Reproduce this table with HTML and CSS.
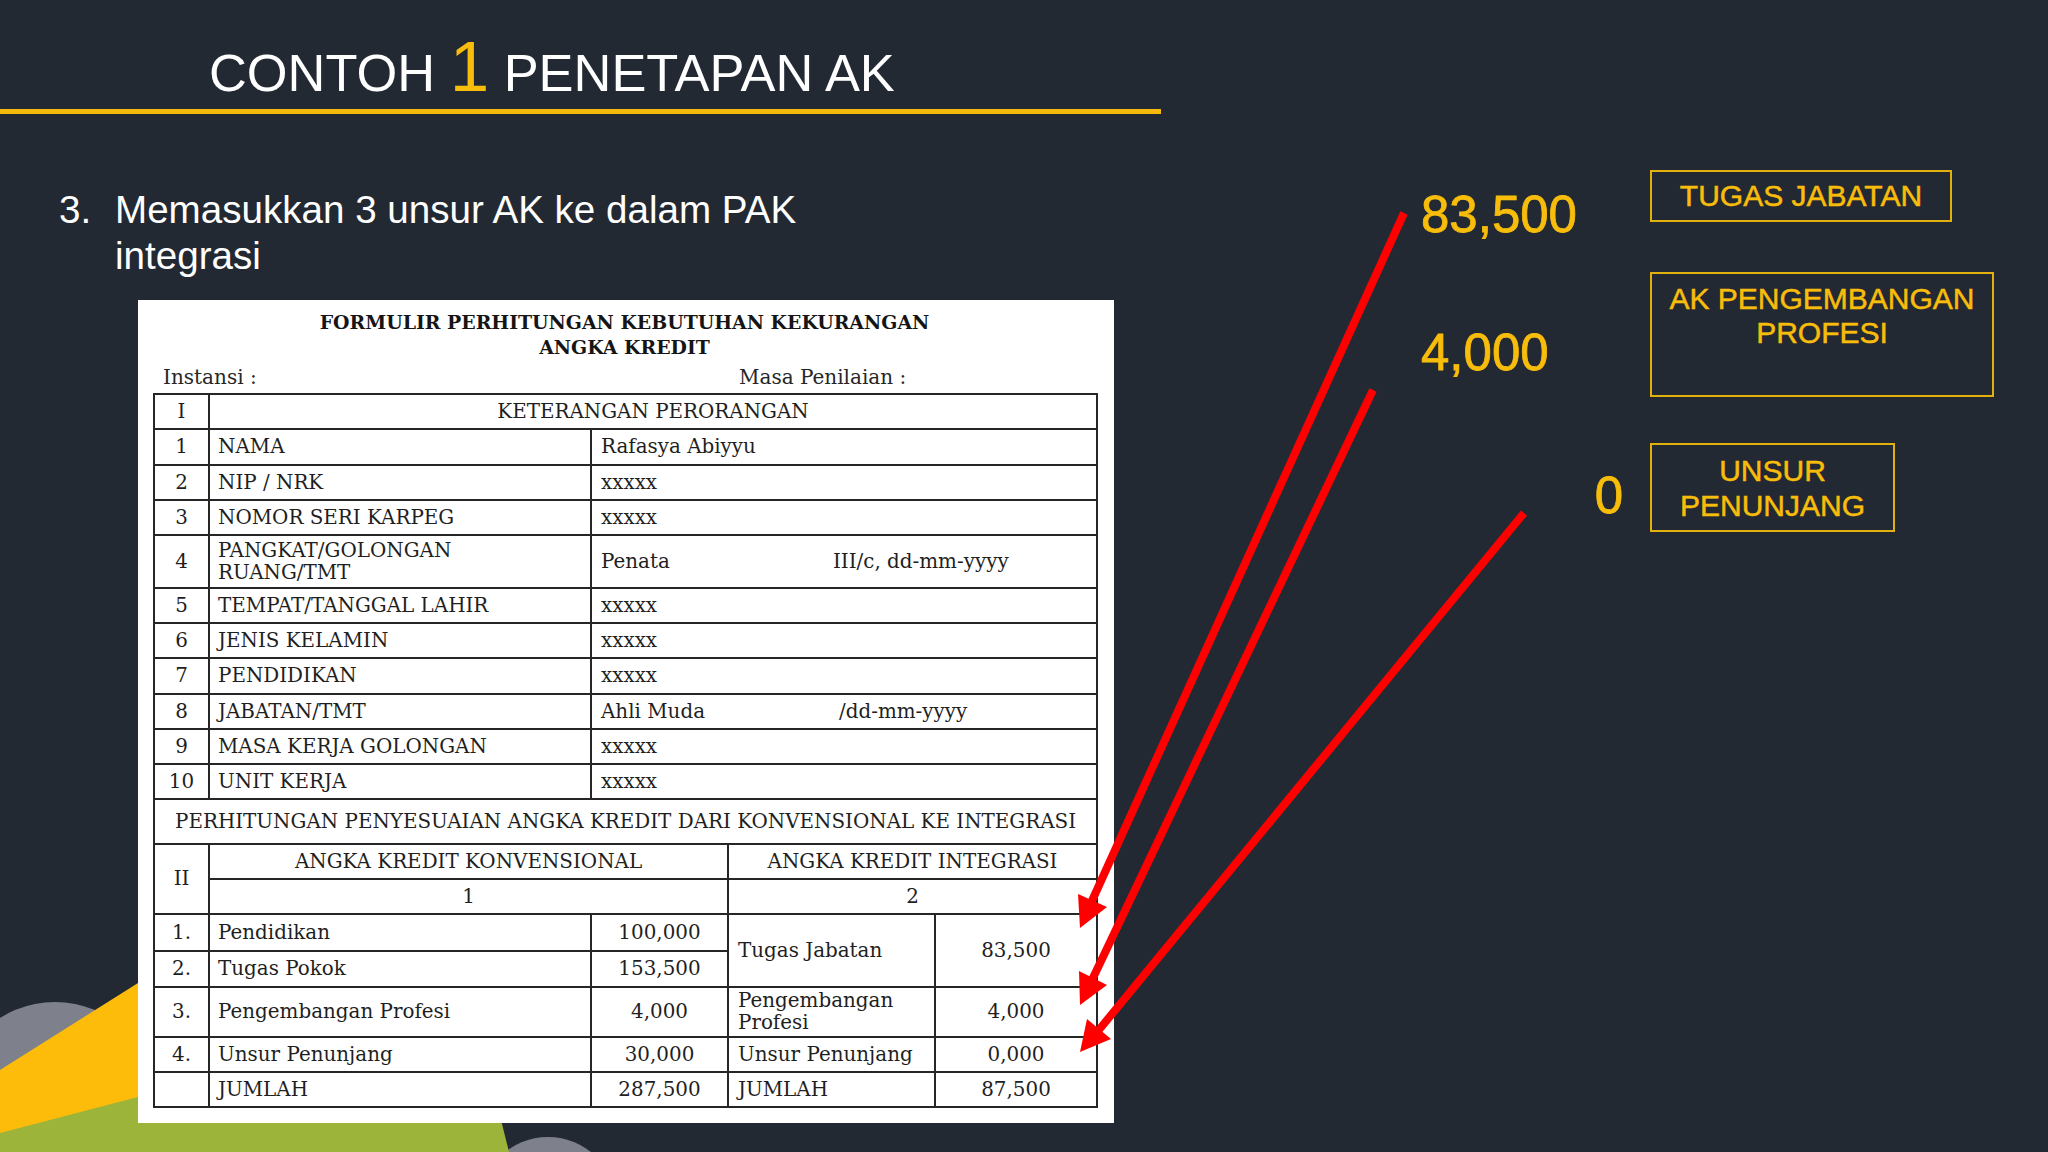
FILE: index.html
```html
<!DOCTYPE html>
<html lang="id">
<head>
<meta charset="utf-8">
<title>Contoh 1 Penetapan AK</title>
<link rel="stylesheet" href="styles.css">
</head>
<body>
<div class="slide">
  <svg class="deco" width="2048" height="1152" viewBox="0 0 2048 1152" aria-hidden="true">
    <circle cx="55" cy="1105" r="103" fill="#7e818b"/>
    <polygon points="0,1070 138,983 420,806 420,1152 0,1152" fill="#fdbc0a"/>
    <circle cx="548" cy="1206" r="69" fill="#7e818b"/>
    <polygon points="0,1133 138,1097 470,1010 502,1124 509,1152 0,1152" fill="#9db43b"/>
  </svg>

  <header class="hdr">
    <h1 class="title">CONTOH <span class="title-num">1</span> PENETAPAN AK</h1>
  </header>

  <main class="content">
    <section class="left">
      <div class="step">
        <span class="step-num">3.</span>
        <span class="step-text">Memasukkan 3 unsur AK ke dalam PAK integrasi</span>
      </div>

      <div class="form">
        <div class="form-title">FORMULIR PERHITUNGAN KEBUTUHAN KEKURANGAN<br>ANGKA KREDIT</div>
        <div class="form-meta"><span class="meta-a">Instansi :</span><span>Masa Penilaian :</span></div>
        <table class="ft">
          <colgroup><col class="c1"><col class="c2"><col class="c3"><col class="c4"><col class="c5"></colgroup>
          <tr class="h35"><td class="ctr">I</td><td colspan="4" class="ctr">KETERANGAN PERORANGAN</td></tr>
          <tr class="h36"><td class="ctr">1</td><td>NAMA</td><td colspan="3" class="val">Rafasya Abiyyu</td></tr>
          <tr class="h35"><td class="ctr">2</td><td>NIP / NRK</td><td colspan="3" class="val">xxxxx</td></tr>
          <tr class="h35"><td class="ctr">3</td><td>NOMOR SERI KARPEG</td><td colspan="3" class="val">xxxxx</td></tr>
          <tr class="h53"><td class="ctr">4</td><td>PANGKAT/GOLONGAN<br>RUANG/TMT</td><td colspan="3" class="val"><span class="v1">Penata</span>III/c, dd-mm-yyyy</td></tr>
          <tr class="h35"><td class="ctr">5</td><td>TEMPAT/TANGGAL LAHIR</td><td colspan="3" class="val">xxxxx</td></tr>
          <tr class="h35"><td class="ctr">6</td><td>JENIS KELAMIN</td><td colspan="3" class="val">xxxxx</td></tr>
          <tr class="h36"><td class="ctr">7</td><td>PENDIDIKAN</td><td colspan="3" class="val">xxxxx</td></tr>
          <tr class="h35"><td class="ctr">8</td><td>JABATAN/TMT</td><td colspan="3" class="val"><span class="v2">Ahli Muda</span>/dd-mm-yyyy</td></tr>
          <tr class="h35"><td class="ctr">9</td><td>MASA KERJA GOLONGAN</td><td colspan="3" class="val">xxxxx</td></tr>
          <tr class="h35"><td class="ctr">10</td><td>UNIT KERJA</td><td colspan="3" class="val">xxxxx</td></tr>
          <tr class="h45"><td colspan="5" class="ctr nw">PERHITUNGAN PENYESUAIAN ANGKA KREDIT DARI KONVENSIONAL KE INTEGRASI</td></tr>
          <tr class="h35"><td rowspan="2" class="ctr">II</td><td colspan="2" class="ctr">ANGKA KREDIT KONVENSIONAL</td><td colspan="2" class="ctr">ANGKA KREDIT INTEGRASI</td></tr>
          <tr class="h35"><td colspan="2" class="ctr">1</td><td colspan="2" class="ctr">2</td></tr>
          <tr class="h37"><td class="ctr">1.</td><td>Pendidikan</td><td class="ctr">100,000</td><td rowspan="2" class="val">Tugas Jabatan</td><td rowspan="2" class="ctr">83,500</td></tr>
          <tr class="h36"><td class="ctr">2.</td><td>Tugas Pokok</td><td class="ctr">153,500</td></tr>
          <tr class="h50"><td class="ctr">3.</td><td>Pengembangan Profesi</td><td class="ctr">4,000</td><td class="val">Pengembangan<br>Profesi</td><td class="ctr">4,000</td></tr>
          <tr class="h35"><td class="ctr">4.</td><td>Unsur Penunjang</td><td class="ctr">30,000</td><td class="val">Unsur Penunjang</td><td class="ctr">0,000</td></tr>
          <tr class="h35"><td></td><td>JUMLAH</td><td class="ctr">287,500</td><td class="val">JUMLAH</td><td class="ctr">87,500</td></tr>
        </table>
      </div>
    </section>

    <section class="right">
      <div class="ak-row r1">
        <div class="ak-val">83,500</div>
        <div class="ak-box b1">TUGAS JABATAN</div>
      </div>
      <div class="ak-row r2">
        <div class="ak-val">4,000</div>
        <div class="ak-box b2">AK PENGEMBANGAN<br>PROFESI</div>
      </div>
      <div class="ak-row r3">
        <div class="ak-val">0</div>
        <div class="ak-box b3">UNSUR<br>PENUNJANG</div>
      </div>
    </section>
  </main>

  <svg class="arrows" width="2048" height="1152" viewBox="0 0 2048 1152" aria-hidden="true">
    <g stroke="#ff0000" stroke-width="8" fill="none">
      <line x1="1404" y1="213" x2="1091" y2="903"/>
      <line x1="1373" y1="390" x2="1092" y2="980"/>
      <line x1="1524" y1="513" x2="1098" y2="1031"/>
    </g>
    <g fill="#ff0000">
      <polygon points="1080,928 1107,907 1078,894"/>
      <polygon points="1080,1005 1107,985 1079,971"/>
      <polygon points="1080,1052 1111,1039 1087,1019"/>
    </g>
  </svg>
</div>
</body>
</html>
```

FILE: styles.css
```css
* {
  box-sizing: border-box;
}

html,
body {
  margin: 0;
  padding: 0;
}

body {
  background: #232933;
  font-family: "Liberation Sans", Arial, sans-serif;
}

.slide {
  position: relative;
  width: 2048px;
  height: 1152px;
  overflow: hidden;
  background: #232933;
}

.deco {
  position: absolute;
  left: 0;
  top: 0;
  z-index: 0;
}

.arrows {
  position: absolute;
  left: 0;
  top: 0;
  z-index: 3;
  pointer-events: none;
}

/* Header */
.hdr {
  position: relative;
  z-index: 1;
  width: 1161px;
  padding: 31px 0 0 209px;
  border-bottom: 5px solid #f5b90b;
}

.title {
  margin: 0;
  font-weight: normal;
  font-size: 52.4px;
  line-height: 71px;
  color: #ffffff;
  white-space: nowrap;
}

.title-num {
  font-size: 71px;
  line-height: 71px;
  color: #f8bd0b;
}

/* Content */
.content {
  position: relative;
  z-index: 1;
  display: flex;
  align-items: flex-start;
}

.left {
  width: 1114px;
  flex: none;
  padding-left: 59px;
}

.step {
  display: flex;
  margin-top: 73px;
  font-size: 38.6px;
  line-height: 46px;
  color: #ffffff;
}

.step-num {
  width: 56px;
  flex: none;
}

.step-text {
  width: 730px;
}

/* Form panel */
.form {
  margin: 21px 0 0 79px;
  width: 976px;
  height: 823px;
  background: #ffffff;
  padding: 10px 0 0 15px;
  font-family: "DejaVu Serif", "Liberation Serif", serif;
  color: #222222;
}

.form-title {
  width: 943px;
  text-align: center;
  font-weight: bold;
  font-size: 18.9px;
  line-height: 25px;
  color: #151515;
}

.form-meta {
  display: flex;
  width: 943px;
  padding-left: 10px;
  margin-top: 5px;
  font-size: 20px;
  line-height: 24px;
  color: #262626;
}

.meta-a {
  width: 576px;
}

.ft {
  margin-top: 4px;
  width: 943px;
  border-collapse: collapse;
  table-layout: fixed;
  font-size: 19.9px;
  line-height: 22px;
  color: #1f1f1f;
}

.c1 { width: 55px; }
.c2 { width: 382px; }
.c3 { width: 137px; }
.c4 { width: 207px; }
.c5 { width: 162px; }

.ft td {
  border: 2px solid #262626;
  padding: 0 6px 0 8px;
  vertical-align: middle;
}

.ft td.ctr {
  text-align: center;
  padding: 0 2px;
}

.ft td.val {
  padding-left: 9px;
}

.ft td.nw {
  white-space: nowrap;
}

.v1 {
  display: inline-block;
  width: 232px;
}

.v2 {
  display: inline-block;
  width: 238px;
}

.h35 { height: 35px; }
.h36 { height: 36px; }
.h37 { height: 37px; }
.h45 { height: 45px; }
.h50 { height: 50px; }
.h53 { height: 53px; }

/* Right side */
.right {
  margin-left: 307px;
  margin-top: 56px;
}

.ak-row {
  display: flex;
  align-items: flex-start;
}

.ak-val {
  width: 229px;
  flex: none;
  font-size: 51px;
  line-height: 51px;
  color: #f8bd0b;
  -webkit-text-stroke: 0.8px #f8bd0b;
}

.r1 {
  height: 52px;
}

.r1 .ak-val {
  margin-top: 19px;
}

.r2 {
  margin-top: 50px;
}

.r2 .ak-val {
  margin-top: 55px;
}

.r3 {
  margin-top: 46px;
}

.r3 .ak-val {
  margin-top: 27px;
  text-align: right;
  padding-right: 27px;
}

.ak-box {
  flex: none;
  border: 2px solid #e2b10e;
  color: #f8bd0b;
  font-size: 30px;
  text-align: center;
  -webkit-text-stroke: 0.5px #f8bd0b;
}

.b1 {
  width: 302px;
  height: 52px;
  line-height: 48px;
}

.b2 {
  width: 344px;
  height: 125px;
  padding-top: 8px;
  line-height: 34px;
}

.b3 {
  width: 245px;
  height: 89px;
  padding-top: 8px;
  line-height: 35px;
}
```
